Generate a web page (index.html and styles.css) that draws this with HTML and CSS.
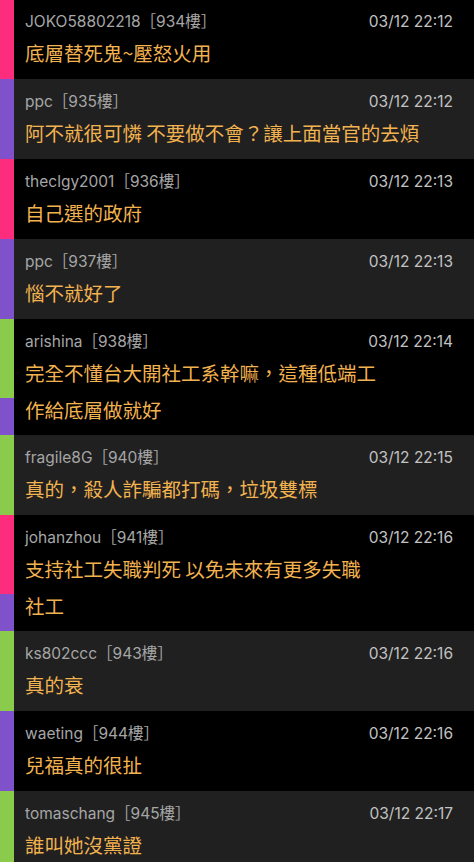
FILE: index.html
```html
<!DOCTYPE html>
<html lang="zh-Hant">
<head>
<meta charset="utf-8">
<title>推文</title>
<link rel="stylesheet" href="styles.css">
</head>
<body>
<div class="list">
  <div class="row dark">
    <div class="seg pink">
      <div class="head"><span class="name">JOKO58802218［934樓］</span><span class="date">03/12 22:12</span></div>
      <div class="text">底層替死鬼~壓怒火用</div>
    </div>
  </div>
  <div class="row gray">
    <div class="seg purple">
      <div class="head"><span class="name">ppc［935樓］</span><span class="date">03/12 22:12</span></div>
      <div class="text">阿不就很可憐 不要做不會？讓上面當官的去煩</div>
    </div>
  </div>
  <div class="row dark">
    <div class="seg pink">
      <div class="head"><span class="name">theclgy2001［936樓］</span><span class="date">03/12 22:13</span></div>
      <div class="text">自己選的政府</div>
    </div>
  </div>
  <div class="row gray">
    <div class="seg purple">
      <div class="head"><span class="name">ppc［937樓］</span><span class="date">03/12 22:13</span></div>
      <div class="text">惱不就好了</div>
    </div>
  </div>
  <div class="row dark">
    <div class="seg green first">
      <div class="head"><span class="name">arishina［938樓］</span><span class="date">03/12 22:14</span></div>
      <div class="text">完全不懂台大開社工系幹嘛，這種低端工</div>
    </div>
    <div class="seg purple cont">
      <div class="text">作給底層做就好</div>
    </div>
  </div>
  <div class="row gray">
    <div class="seg green">
      <div class="head"><span class="name">fragile8G［940樓］</span><span class="date">03/12 22:15</span></div>
      <div class="text">真的，殺人詐騙都打碼，垃圾雙標</div>
    </div>
  </div>
  <div class="row dark">
    <div class="seg pink first">
      <div class="head"><span class="name">johanzhou［941樓］</span><span class="date">03/12 22:16</span></div>
      <div class="text">支持社工失職判死 以免未來有更多失職</div>
    </div>
    <div class="seg purple cont">
      <div class="text">社工</div>
    </div>
  </div>
  <div class="row gray">
    <div class="seg green">
      <div class="head"><span class="name">ks802ccc［943樓］</span><span class="date">03/12 22:16</span></div>
      <div class="text">真的衰</div>
    </div>
  </div>
  <div class="row dark">
    <div class="seg purple">
      <div class="head"><span class="name">waeting［944樓］</span><span class="date">03/12 22:16</span></div>
      <div class="text">兒福真的很扯</div>
    </div>
  </div>
  <div class="row gray">
    <div class="seg green">
      <div class="head"><span class="name">tomaschang［945樓］</span><span class="date">03/12 22:17</span></div>
      <div class="text">誰叫她沒黨證</div>
    </div>
  </div>
</div>
</body>
</html>
```

FILE: styles.css
```css
html, body {
  margin: 0;
  padding: 0;
  background: #000;
}

body {
  font-family: "Inter", "Noto Sans CJK TC", sans-serif;
  overflow: hidden;
}

.list {
  display: flex;
  flex-direction: column;
  margin-top: -1px;
}

.row.dark { background: #000; }
.row.gray { background: #202020; }

.seg {
  border-left: 14px solid #888;
  padding: 12px 21px 12px 11px;
  height: 80px;
  box-sizing: border-box;
}

.seg.first { height: 79px; }

.seg.cont {
  height: 37px;
  padding-top: 0;
  padding-bottom: 13px;
}

.seg.cont .text {
  margin-top: 0;
  line-height: 24px;
}

.pink { border-left-color: #fe2c7d; }
.purple { border-left-color: #7f52cc; }
.green { border-left-color: #8bcb4b; }

.head {
  display: flex;
  justify-content: space-between;
  align-items: center;
  height: 22px;
  font-size: 15.5px;
  line-height: 22px;
}

.name { color: #a6a6a6; }
.date { color: #c2c2c2; }

.text {
  margin-top: 6px;
  font-family: "Noto Sans CJK TC", sans-serif;
  font-size: 19.5px;
  line-height: 28px;
  color: #f2b24f;
  white-space: nowrap;
}
```
